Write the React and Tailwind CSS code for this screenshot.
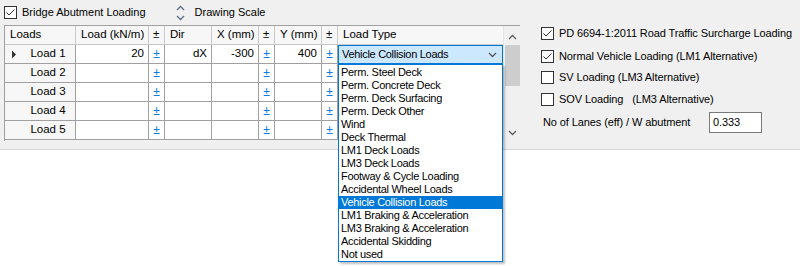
import React from "react";

const cols = [
  { label: "Loads", w: "w-[71px]" },
  { label: "Load (kN/m)", w: "w-[73px]" },
  { label: "±", w: "w-[16px]" },
  { label: "Dir", w: "w-[47px]" },
  { label: "X (mm)", w: "w-[47px]" },
  { label: "±", w: "w-[16px]" },
  { label: "Y (mm)", w: "w-[47px]" },
  { label: "±", w: "w-[16px]" },
  { label: "Load Type", w: "w-[165px]" },
];

const rows = [
  { name: "Load 1", load: "20", dir: "dX", x: "-300", y: "400" },
  { name: "Load 2" },
  { name: "Load 3" },
  { name: "Load 4" },
  { name: "Load 5" },
];

const loadTypes = [
  "Perm. Steel Deck",
  "Perm. Concrete Deck",
  "Perm. Deck Surfacing",
  "Perm. Deck Other",
  "Wind",
  "Deck Thermal",
  "LM1 Deck Loads",
  "LM3 Deck Loads",
  "Footway & Cycle Loading",
  "Accidental Wheel Loads",
  "Vehicle Collision Loads",
  "LM1 Braking & Acceleration",
  "LM3 Braking & Acceleration",
  "Accidental Skidding",
  "Not used",
];

const Check = ({ checked }) => (
  <span className="w-[13px] h-[13px] border border-[#333333] bg-white flex items-center justify-center shrink-0">
    {checked && (
      <svg width="11" height="11" viewBox="0 0 11 11">
        <path d="M1.5 5.5 L4 8 L9.5 2.5" fill="none" stroke="#333333" strokeWidth="1" />
      </svg>
    )}
  </span>
);

const Pm = () => <span className="text-[#0a7ce6] text-[12px]">±</span>;

const Chevron = ({ up, color = "#555555" }) => (
  <svg width="9" height="6" viewBox="0 0 9 6">
    <path d={up ? "M1 5 L4.5 1.5 L8 5" : "M1 1 L4.5 4.5 L8 1"} fill="none" stroke={color} strokeWidth="1.3" />
  </svg>
);

export default function App() {
  return (
    <div className="w-[800px] h-[266px] bg-white relative overflow-hidden text-[11px] text-black" style={{ fontFamily: "'Liberation Sans', Arial, sans-serif" }}>
      <div className="bg-[#f0f0f0] h-[150px] border-b border-[#d5d5d5] flex flex-col">
        {/* top toolbar */}
        <div className="h-[25px] flex items-center pl-[4px]">
          <label className="flex items-center gap-[5px]">
            <Check checked />
            <span>Bridge Abutment Loading</span>
          </label>
          <div className="ml-[28px] flex flex-col items-center gap-[4px] w-[14px]">
            <Chevron up color="#5b6f8c" />
            <Chevron color="#5b6f8c" />
          </div>
          <span className="ml-[7px]">Drawing Scale</span>
        </div>

        <div className="flex">
          {/* grid */}
          <div className="ml-[4px] h-[116px] flex border-l border-t border-[#a0a0a0] overflow-hidden">
            <div className="flex flex-col">
              <div className="flex h-[19px] bg-[#f7f7f7]">
                {cols.map((c, i) => (
                  <div key={i} className={`${c.w} border-r border-b border-[#c9c9c9] last:border-r-0 flex items-center text-[11.5px] ${c.label === "±" ? "pl-[4px]" : "pl-[5px]"}`}>
                    {c.label}
                  </div>
                ))}
              </div>
              {rows.map((r, i) => (
                <div key={i} className="flex h-[19px]">
                  <div className="w-[71px] bg-[#f7f7f7] border-r border-b border-[#a0a0a0] flex items-center relative text-[11.5px]">
                    {i === 0 && (
                      <svg className="absolute left-[6px]" width="6" height="9" viewBox="0 0 6 9">
                        <path d="M1 0.5 L5 4.5 L1 8.5 Z" fill="#333333" />
                      </svg>
                    )}
                    <span className="w-full text-center pl-[16px]">{r.name}</span>
                  </div>
                  <div className="w-[73px] bg-white border-r border-b border-[#a0a0a0] flex items-center justify-end pr-[4px] text-[11.5px]">{r.load}</div>
                  <div className="w-[16px] bg-white border-r border-b border-[#a0a0a0] flex items-center justify-center"><Pm /></div>
                  <div className="w-[47px] bg-white border-r border-b border-[#a0a0a0] flex items-center justify-end pr-[4px] text-[11.5px]">{r.dir}</div>
                  <div className="w-[47px] bg-white border-r border-b border-[#a0a0a0] flex items-center justify-end pr-[4px] text-[11.5px]">{r.x}</div>
                  <div className="w-[16px] bg-white border-r border-b border-[#a0a0a0] flex items-center justify-center"><Pm /></div>
                  <div className="w-[47px] bg-white border-r border-b border-[#a0a0a0] flex items-center justify-end pr-[4px] text-[11.5px]">{r.y}</div>
                  <div className="w-[16px] bg-white border-r border-b border-[#a0a0a0] flex items-center justify-center"><Pm /></div>
                  {i === 0 ? (
                    <div className="w-[165px] bg-[#cce8ff] border border-[#0078d7] flex items-center justify-between pl-[3px] pr-[5px] text-[11px] tracking-[-0.3px]">
                      <span>Vehicle Collision Loads</span>
                      <Chevron color="#555555" />
                    </div>
                  ) : (
                    <div className="w-[165px] bg-white border-b border-[#a0a0a0]" />
                  )}
                </div>
              ))}
            </div>
            {/* scrollbar */}
            <div className="w-[17px] bg-[#f0f0f0] flex flex-col items-center border-l border-[#e5e5e5]">
              <div className="h-[17px] flex items-center justify-center mt-[2px]"><Chevron up color="#606060" /></div>
              <div className="w-[15px] h-[41px] bg-[#cdcdcd]" />
              <div className="flex-1" />
              <div className="h-[17px] flex items-center justify-center"><Chevron color="#606060" /></div>
            </div>
          </div>

          {/* right options */}
          <div className="ml-[21px] flex flex-col pt-[2px] tracking-[-0.1px]">
            <label className="flex items-center gap-[5px] h-[13px]">
              <Check checked />
              <span>PD 6694-1:2011 Road Traffic Surcharge Loading</span>
            </label>
            <label className="flex items-center gap-[5px] h-[13px] mt-[10px]">
              <Check checked />
              <span>Normal Vehicle Loading (LM1 Alternative)</span>
            </label>
            <label className="flex items-center gap-[5px] h-[13px] mt-[8px]">
              <Check />
              <span>SV Loading (LM3 Alternative)</span>
            </label>
            <label className="flex items-center gap-[5px] h-[13px] mt-[9px]">
              <Check />
              <span className="whitespace-pre">SOV Loading   (LM3 Alternative)</span>
            </label>
            <div className="flex items-center mt-[6px]">
              <span className="w-[168px] pl-[2px]">No of Lanes (eff) / W abutment</span>
              <div className="w-[53px] h-[21px] bg-white border border-[#7a7a7a] flex items-center pl-[3px]">0.333</div>
            </div>
          </div>
        </div>
      </div>

      {/* open dropdown list */}
      <div className="absolute left-[338px] top-[64px] w-[165px] h-[198px] bg-white border border-[#0078d7] pt-[1px] shadow-[2px_2px_2px_rgba(0,0,0,0.25)]">
        {loadTypes.map((t) => (
          <div
            key={t}
            className={`h-[13px] leading-[13px] pl-[2px] text-[11px] tracking-[-0.3px] ${t === "Vehicle Collision Loads" ? "bg-[#0078d7] text-white" : ""}`}
          >
            {t}
          </div>
        ))}
      </div>
    </div>
  );
}
